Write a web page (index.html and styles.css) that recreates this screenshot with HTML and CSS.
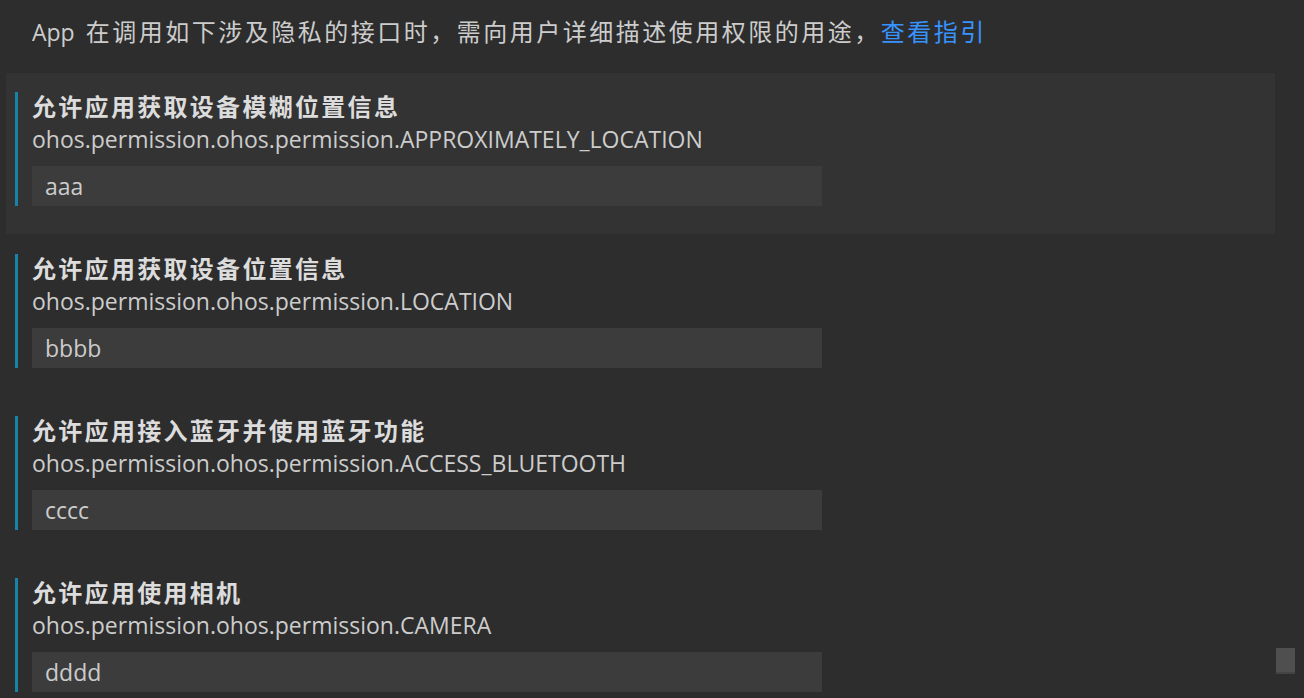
FILE: index.html
```html
<!DOCTYPE html>
<html lang="zh-CN">
<head>
  <meta charset="UTF-8">
  <meta name="viewport" content="width=device-width, initial-scale=1.0">
  <title>隐私权限说明</title>
  <link rel="stylesheet" href="styles.css">
</head>
<body>
  <div class="page">
    <p class="intro">App <span class="cjk">在调用如下涉及隐私的接口时，需向用户详细描述使用权限的用途，<a href="#" class="link">查看指引</a></span></p>

    <div class="perm-list">
      <div class="perm-item active">
        <div class="perm-body">
          <div class="perm-title">允许应用获取设备模糊位置信息</div>
          <div class="perm-name">ohos.permission.ohos.permission.APPROXIMATELY_LOCATION</div>
          <input class="perm-reason" type="text" value="aaa">
        </div>
      </div>
      <div class="perm-item">
        <div class="perm-body">
          <div class="perm-title">允许应用获取设备位置信息</div>
          <div class="perm-name">ohos.permission.ohos.permission.LOCATION</div>
          <input class="perm-reason" type="text" value="bbbb">
        </div>
      </div>
      <div class="perm-item">
        <div class="perm-body">
          <div class="perm-title">允许应用接入蓝牙并使用蓝牙功能</div>
          <div class="perm-name">ohos.permission.ohos.permission.ACCESS_BLUETOOTH</div>
          <input class="perm-reason" type="text" value="cccc">
        </div>
      </div>
      <div class="perm-item">
        <div class="perm-body">
          <div class="perm-title">允许应用使用相机</div>
          <div class="perm-name">ohos.permission.ohos.permission.CAMERA</div>
          <input class="perm-reason" type="text" value="dddd">
        </div>
      </div>
    </div>
  </div>
  <div class="scroll-thumb"></div>
</body>
</html>
```

FILE: styles.css
```css
:root {
  --bg: #2d2d2d;
  --card-bg: #333333;
  --input-bg: #3c3c3c;
  --text: #cccccc;
  --title: #dcdcdc;
  --accent: #1584a8;
  --link: #3794ff;
}
* { box-sizing: border-box; }
html, body {
  height: 100%;
  overflow: hidden;
}
body {
  margin: 0;
  background: var(--bg);
  color: var(--text);
  font-family: "Open Sans", "Noto Sans CJK SC", sans-serif;
  font-size: 23px;
}
.cjk {
  font-size: 24px;
  letter-spacing: 2.5px;
  margin-left: 5px;
}
.intro {
  margin: 0 0 23px;
  padding: 14px 0 0 32px;
  line-height: 36px;
}
.link {
  color: var(--link);
  text-decoration: none;
}
.perm-item {
  margin: 0 29px 1px 6px;
  padding: 19px 0 28px 9px;
}
.perm-item.active {
  background: var(--card-bg);
}
.perm-body {
  border-left: 3px solid var(--accent);
  padding-left: 14px;
}
.perm-title {
  font-size: 24px;
  letter-spacing: 2.3px;
  font-weight: 700;
  color: var(--title);
  line-height: 30px;
}
.perm-name {
  line-height: 34px;
  margin-bottom: 10px;
}
.perm-reason {
  display: block;
  width: 790px;
  height: 40px;
  padding: 0 13px;
  border: none;
  outline: none;
  background: var(--input-bg);
  color: var(--text);
  font-family: inherit;
  font-size: 23px;
}
.scroll-thumb {
  position: absolute;
  left: 1276px;
  top: 648px;
  width: 19px;
  height: 26px;
  background: #4f4f4f;
  border-bottom: 2px solid #444;
}
```
